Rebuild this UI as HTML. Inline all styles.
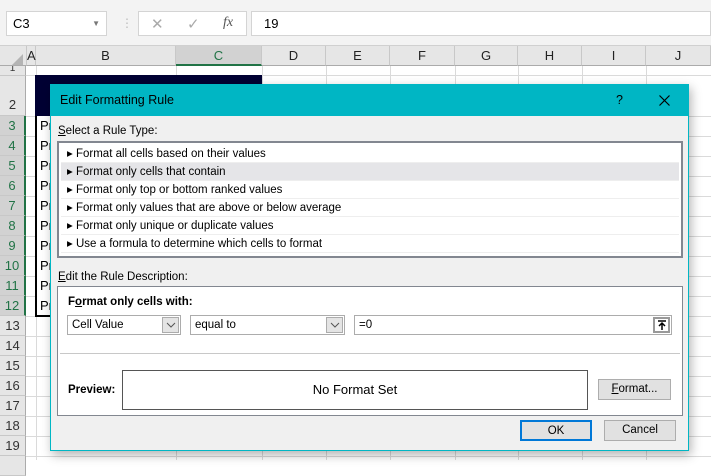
<!DOCTYPE html>
<html><head><style>
*{box-sizing:border-box;margin:0;padding:0}
body{width:711px;height:460px;overflow:hidden;background:#fff;font-family:"Liberation Sans",sans-serif;font-size:12px;color:#000;position:relative}
.a{position:absolute}
.ch{position:absolute;top:46px;height:20px;background:#e6e6e6;border-right:1px solid #c8c8c8;border-bottom:1px solid #ababab;text-align:center;line-height:20px;font-size:13px;color:#222}
.rh{position:absolute;left:0;width:26px;background:#e6e6e6;border-bottom:1px solid #c8c8c8;border-right:1px solid #ababab;text-align:center;font-size:13px;color:#333}
.hl{position:absolute;left:26px;right:0;height:1px;background:#dadada}
.vl{position:absolute;top:66px;bottom:0;width:1px;background:#dadada}
.it{position:absolute;left:2px;right:2px;height:18px;line-height:18px;padding-left:6px;font-size:11.5px;border-bottom:1px solid #eee}
.dd{position:absolute;height:20px;background:#fff;border:1px solid #acacac;font-size:11.5px;line-height:18px;padding-left:4px}
.db{position:absolute;right:1px;top:1px;width:17px;height:16px;background:#e4e4e4;border:1px solid #acacac}
.btn{position:absolute;height:21px;background:#e1e1e1;border:1px solid #adadad;text-align:center;line-height:19px;font-size:11.5px}
</style></head><body>
<div class="a" style="left:0;top:0;width:711px;height:46px;background:#f3f3f3;border-bottom:1px solid #d0d0d0"></div>
<div class="a" style="left:6px;top:11px;width:101px;height:25px;background:#fff;border:1px solid #d4d4d4;font-size:13px;line-height:23px;padding-left:6px">C3<span style="position:absolute;right:6px;top:0;font-size:8px;color:#777">▼</span></div>
<div class="a" style="left:121px;top:16px;color:#bbb;font-size:12px">⋮</div>
<div class="a" style="left:138px;top:11px;width:109px;height:25px;background:#fff;border:1px solid #d4d4d4"><span style="position:absolute;left:12px;top:3px;color:#aaa;font-size:15px">✕</span><span style="position:absolute;left:48px;top:3px;color:#aaa;font-size:15px">✓</span><span style="position:absolute;left:84px;top:3px;color:#555;font-style:italic;font-family:'Liberation Serif',serif;font-size:14px">fx</span></div>
<div class="a" style="left:251px;top:11px;width:460px;height:25px;background:#fff;border:1px solid #d4d4d4;font-size:13px;line-height:23px;padding-left:12px">19</div>

<div class="ch" style="left:0;width:27px"></div>
<div class="a" style="left:12px;top:54px;width:0;height:0;border-left:11px solid transparent;border-bottom:11px solid #b4b4b4"></div>
<div class="ch" style="left:27px;width:9px">A</div>
<div class="ch" style="left:36px;width:140px">B</div>
<div class="ch" style="left:176px;width:86px;background:#d2d2d2;border-bottom:2px solid #217346;color:#217346">C</div>
<div class="ch" style="left:262px;width:64px">D</div>
<div class="ch" style="left:326px;width:64px">E</div>
<div class="ch" style="left:390px;width:65px">F</div>
<div class="ch" style="left:455px;width:63px">G</div>
<div class="ch" style="left:518px;width:64px">H</div>
<div class="ch" style="left:582px;width:64px">I</div>
<div class="ch" style="left:646px;width:65px">J</div>

<div class="vl" style="left:36px"></div><div class="vl" style="left:176px"></div><div class="vl" style="left:262px"></div><div class="vl" style="left:326px"></div><div class="vl" style="left:390px"></div><div class="vl" style="left:455px"></div><div class="vl" style="left:518px"></div><div class="vl" style="left:582px"></div><div class="vl" style="left:646px"></div>
<div class="hl" style="top:75px"></div>
<div class="hl" style="top:116px"></div><div class="hl" style="top:136px"></div><div class="hl" style="top:156px"></div><div class="hl" style="top:176px"></div><div class="hl" style="top:196px"></div><div class="hl" style="top:216px"></div><div class="hl" style="top:236px"></div><div class="hl" style="top:256px"></div><div class="hl" style="top:276px"></div><div class="hl" style="top:296px"></div><div class="hl" style="top:316px"></div><div class="hl" style="top:336px"></div><div class="hl" style="top:356px"></div><div class="hl" style="top:376px"></div><div class="hl" style="top:396px"></div><div class="hl" style="top:416px"></div><div class="hl" style="top:436px"></div><div class="hl" style="top:456px"></div>

<div class="rh" style="top:66px;height:10px;line-height:6px;font-size:10px;overflow:hidden">1</div>
<div class="rh" style="top:76px;height:40px;line-height:58px">2</div>
<div class="rh" style="top:116px;height:20px;line-height:20px;background:#d2d2d2;border-right:2px solid #217346;color:#217346">3</div>
<div class="rh" style="top:136px;height:20px;line-height:20px;background:#d2d2d2;border-right:2px solid #217346;color:#217346">4</div>
<div class="rh" style="top:156px;height:20px;line-height:20px;background:#d2d2d2;border-right:2px solid #217346;color:#217346">5</div>
<div class="rh" style="top:176px;height:20px;line-height:20px;background:#d2d2d2;border-right:2px solid #217346;color:#217346">6</div>
<div class="rh" style="top:196px;height:20px;line-height:20px;background:#d2d2d2;border-right:2px solid #217346;color:#217346">7</div>
<div class="rh" style="top:216px;height:20px;line-height:20px;background:#d2d2d2;border-right:2px solid #217346;color:#217346">8</div>
<div class="rh" style="top:236px;height:20px;line-height:20px;background:#d2d2d2;border-right:2px solid #217346;color:#217346">9</div>
<div class="rh" style="top:256px;height:20px;line-height:20px;background:#d2d2d2;border-right:2px solid #217346;color:#217346">10</div>
<div class="rh" style="top:276px;height:20px;line-height:20px;background:#d2d2d2;border-right:2px solid #217346;color:#217346">11</div>
<div class="rh" style="top:296px;height:20px;line-height:20px;background:#d2d2d2;border-right:2px solid #217346;color:#217346">12</div>
<div class="rh" style="top:316px;height:20px;line-height:20px">13</div>
<div class="rh" style="top:336px;height:20px;line-height:20px">14</div>
<div class="rh" style="top:356px;height:20px;line-height:20px">15</div>
<div class="rh" style="top:376px;height:20px;line-height:20px">16</div>
<div class="rh" style="top:396px;height:20px;line-height:20px">17</div>
<div class="rh" style="top:416px;height:20px;line-height:20px">18</div>
<div class="rh" style="top:436px;height:20px;line-height:20px">19</div>
<div class="rh" style="top:456px;height:20px"></div>

<div class="a" style="left:35px;top:75px;width:227px;height:41px;background:#000033"></div>
<div class="a" style="left:35px;top:116px;width:20px;height:201px;border:2px solid #000;border-top:none;font-size:13px;line-height:20px;padding-left:3px;background:#fff">Pr<br>Pr<br>Pr<br>Pr<br>Pr<br>Pr<br>Pr<br>Pr<br>Pr<br>Pr</div>

<div class="a" style="left:50px;top:84px;width:639px;height:367px;background:#f0f0f0;border:1px solid #00b6c4;box-shadow:2px 4px 10px rgba(0,0,0,.3)">
<div class="a" style="left:0;top:0;width:637px;height:31px;background:#00b6c4;font-size:12.5px;line-height:31px;padding-left:9px">Edit Formatting Rule
<span style="position:absolute;left:565px;top:0">?</span>
<svg class="a" style="left:608px;top:10px" width="11" height="11"><path d="M0.5 0.5L10.5 10.5M10.5 0.5L0.5 10.5" stroke="#000" stroke-width="1.2"/></svg></div>
<div class="a" style="left:7px;top:40px;font-size:11.5px"><u>S</u>elect a Rule Type:</div>
<div class="a" style="left:6px;top:56px;width:626px;height:117px;background:#fff;border:2px solid #828790">
<div class="it" style="top:2px">▸ Format all cells based on their values</div>
<div class="it" style="top:20px;background:#e5e5e8">▸ Format only cells that contain</div>
<div class="it" style="top:38px">▸ Format only top or bottom ranked values</div>
<div class="it" style="top:56px">▸ Format only values that are above or below average</div>
<div class="it" style="top:74px">▸ Format only unique or duplicate values</div>
<div class="it" style="top:92px">▸ Use a formula to determine which cells to format</div>
</div>
<div class="a" style="left:7px;top:186px;font-size:11.5px"><u>E</u>dit the Rule Description:</div>
<div class="a" style="left:6px;top:201px;width:626px;height:130px;background:#fff;border:1px solid #828790">
<div class="a" style="left:10px;top:9px;font-weight:bold;font-size:11.5px">F<u>o</u>rmat only cells with:</div>
<div class="dd" style="left:9px;top:28px;width:114px">Cell Value<div class="db"><svg class="a" style="left:3px;top:4px" width="10" height="6"><path d="M1 1L5 5L9 1" stroke="#555" fill="none"/></svg></div></div>
<div class="dd" style="left:132px;top:28px;width:155px">equal to<div class="db"><svg class="a" style="left:3px;top:4px" width="10" height="6"><path d="M1 1L5 5L9 1" stroke="#555" fill="none"/></svg></div></div>
<div class="dd" style="left:296px;top:28px;width:318px">=0<div class="db" style="background:#fff;border:2px solid #999"><svg class="a" style="left:2px;top:1px" width="10" height="11"><path d="M1 1H9M5 3V10M2 6L5 3L8 6" stroke="#000" stroke-width="1.5" fill="none"/></svg></div></div>
<div class="a" style="left:2px;top:66px;width:620px;height:1px;background:#c8c8c8"></div>
<div class="a" style="left:10px;top:97px;font-weight:bold;font-size:11.5px">Preview:</div>
<div class="a" style="left:64px;top:83px;width:466px;height:40px;border:1px solid #555;text-align:center;line-height:38px;font-size:13px">No Format Set</div>
<div class="btn" style="left:540px;top:92px;width:73px"><u>F</u>ormat...</div>
</div>
<div class="btn" style="left:469px;top:335px;width:72px;border:2px solid #0078d7">OK</div>
<div class="btn" style="left:553px;top:335px;width:72px">Cancel</div>
</div>
</body></html>
